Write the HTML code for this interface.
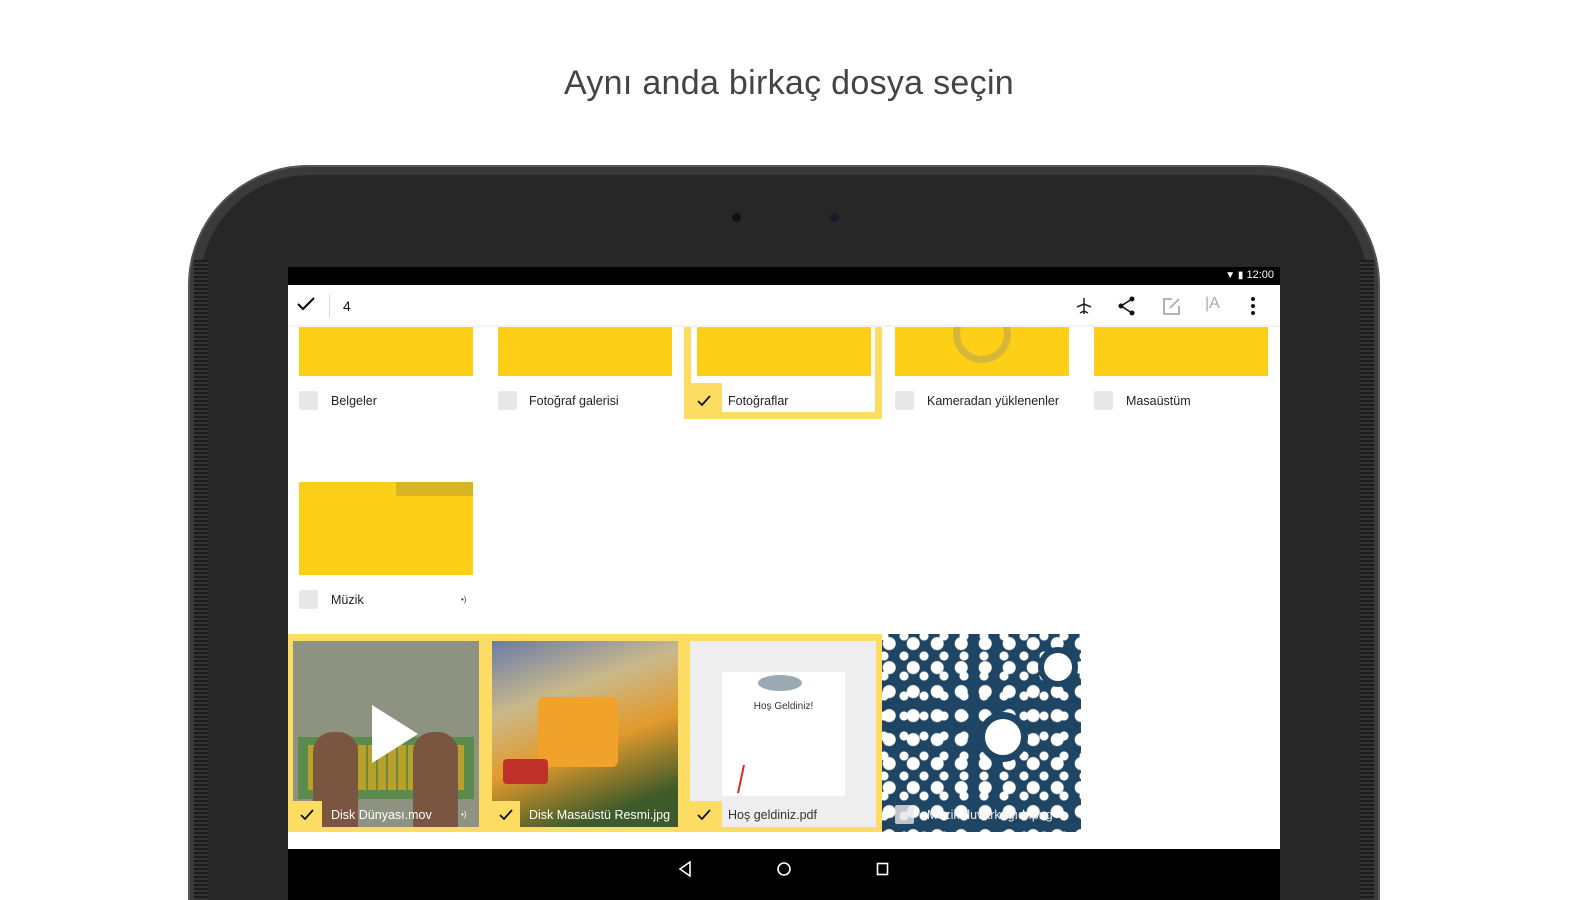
<!DOCTYPE html>
<html style="width:1593px;height:900px;overflow:hidden"><head><meta charset="utf-8"><style>
*{margin:0;padding:0;box-sizing:border-box}
body{width:1593px;height:900px;background:#fff;position:relative;overflow:hidden;font-family:"Liberation Sans",sans-serif}
.title{position:absolute;top:64px;left:0;width:1578px;text-align:center;font-size:34px;color:#444;letter-spacing:0.3px}
.tab{position:absolute;left:188px;top:165px;width:1192px;height:735px;border-radius:120px 120px 0 0;background:#3a3a3a;border:2px solid #555;border-bottom:0}
.tab2{position:absolute;left:200px;top:175px;width:1168px;height:725px;border-radius:110px 110px 0 0;background:#272727}
.grill{position:absolute;top:260px;width:14px;height:640px;background:repeating-linear-gradient(#1c1c1c 0 2px,#333 2px 4px)}
.cam{position:absolute;width:9px;height:9px;border-radius:50%;background:#111;top:213px}
.screen{position:absolute;left:288px;top:267px;width:992px;height:633px;background:#fff;overflow:hidden}
.sb{position:absolute;left:0;top:0;width:992px;height:18px;background:#000;color:#fff;font-size:11px;text-align:right;padding:2px 6px}
.tb{position:absolute;left:0;top:18px;width:992px;height:42px;background:#fff;border-bottom:2px solid #f3f3f3}
.y{position:absolute;background:#fdd017}
.lbl{position:absolute;font-size:12.5px;color:#222}
.cb{position:absolute;width:19px;height:19px;background:#e8e8e8;border-radius:2px}
.nav{position:absolute;left:0;top:582px;width:992px;height:51px;background:#000}
.sel{position:absolute;background:#fddc63}
</style></head><body>
<div class="title">Aynı anda birkaç dosya seçin</div>
<div class="tab"></div><div class="tab2"></div>
<div class="grill" style="left:194px"></div><div class="grill" style="left:1360px"></div>
<div class="cam" style="left:732px"></div><div class="cam" style="left:830px;background:#1a1a2a"></div>
<div class="screen">
 <div class="sb"><span style="font-size:10px">▼ ▮</span> 12:00</div>
 <div class="tb">
  <svg style="position:absolute;left:9px;top:12px" width="18" height="14"><path d="M1 7l5 5L17 1" stroke="#111" stroke-width="2.2" fill="none"/></svg>
  <div style="position:absolute;left:41px;top:9px;width:1px;height:24px;background:#ddd"></div>
  <div style="position:absolute;left:55px;top:13px;font-size:14px;color:#111">4</div>
  <svg style="position:absolute;left:786px;top:11px" width="20" height="20"><path d="M10 2v16M3 11l7-3 7 3M6 17l4-2 4 2" stroke="#222" stroke-width="1.5" fill="none"/></svg>
  <svg style="position:absolute;left:829px;top:11px" width="20" height="20"><circle cx="15" cy="3" r="2.5" fill="#111"/><circle cx="4" cy="10" r="2.5" fill="#111"/><circle cx="15" cy="17" r="2.5" fill="#111"/><path d="M15 3L4 10l11 7" stroke="#111" stroke-width="1.6" fill="none"/></svg>
  <svg style="position:absolute;left:874px;top:11px" width="20" height="20"><path d="M10 3H2v15h15v-8M8 12l9-9" stroke="#aaa" stroke-width="1.8" fill="none"/></svg>
  <div style="position:absolute;left:917px;top:10px;font-size:16px;color:#aaa">|A</div>
  <svg style="position:absolute;left:962px;top:11px" width="6" height="20"><circle cx="3" cy="3" r="2" fill="#111"/><circle cx="3" cy="10" r="2" fill="#111"/><circle cx="3" cy="17" r="2" fill="#111"/></svg>
 </div>
 <div class="sel" style="left:396px;top:60px;width:198px;height:92px"></div>
 <div style="position:absolute;left:403px;top:60px;width:184px;height:85px;background:#fff"></div>
 <div class="sel" style="left:396px;top:116px;width:38px;height:36px"></div>
 <div class="y" style="left:11px;top:60px;width:174px;height:49px"></div>
 <div class="y" style="left:210px;top:60px;width:174px;height:49px"></div>
 <div class="y" style="left:409px;top:60px;width:174px;height:49px"></div>
 <div class="y" style="left:607px;top:60px;width:174px;height:49px"></div>
 <div style="position:absolute;left:665px;top:38px;width:58px;height:58px;border:7px solid #d8b63a;border-radius:50%;clip-path:inset(22px 0 0 0)"></div>
 <div class="y" style="left:806px;top:60px;width:174px;height:49px"></div>
 <div class="cb" style="left:11px;top:124px"></div><div class="lbl" style="left:43px;top:127px">Belgeler</div>
 <div class="cb" style="left:210px;top:124px"></div><div class="lbl" style="left:241px;top:127px">Fotoğraf galerisi</div>
 <svg style="position:absolute;left:409px;top:128px" width="14" height="12"><path d="M1 6l4 4 8-9" stroke="#111" stroke-width="1.8" fill="none"/></svg><div class="lbl" style="left:440px;top:127px">Fotoğraflar</div>
 <div class="cb" style="left:607px;top:124px"></div><div class="lbl" style="left:639px;top:127px">Kameradan yüklenenler</div>
 <div class="cb" style="left:806px;top:124px"></div><div class="lbl" style="left:838px;top:127px">Masaüstüm</div>
 <div class="y" style="left:11px;top:215px;width:174px;height:93px"></div>
 <div style="position:absolute;left:108px;top:215px;width:77px;height:14px;background:#d9b523"></div>
 <div class="cb" style="left:11px;top:323px"></div><div class="lbl" style="left:43px;top:326px">Müzik</div>
 <div style="position:absolute;left:173px;top:328px;font-size:8px;color:#333">•)</div>
 <div class="sel" style="left:0;top:367px;width:594px;height:198px"></div>
 <div style="position:absolute;left:5px;top:374px;width:186px;height:186px;background:#8e9280"></div>
 <div style="position:absolute;left:10px;top:470px;width:176px;height:62px;background:#5b8a4d"></div>
 <div style="position:absolute;left:20px;top:478px;width:156px;height:45px;background:repeating-linear-gradient(90deg,#b8a12a 0 8px,#6c8a3f 8px 10px)"></div>
 <div style="position:absolute;left:25px;top:465px;width:45px;height:95px;background:#7a5540;border-radius:20px 20px 0 0"></div>
 <div style="position:absolute;left:125px;top:465px;width:45px;height:95px;background:#7a5540;border-radius:20px 20px 0 0"></div>
 <svg style="position:absolute;left:84px;top:438px" width="46" height="58"><path d="M0 0L46 29L0 58Z" fill="#fff"/></svg>
 <div style="position:absolute;left:204px;top:374px;width:186px;height:186px;background:linear-gradient(160deg,#6a7ba8 0%,#c9b98a 30%,#e29a2c 55%,#3c5a2a 85%)"></div>
 <div style="position:absolute;left:250px;top:430px;width:80px;height:70px;background:#f0a22a;border-radius:6px"></div>
 <div style="position:absolute;left:215px;top:492px;width:45px;height:25px;background:#c0302a;border-radius:4px"></div>
 <div style="position:absolute;left:402px;top:374px;width:186px;height:186px;background:#eee"></div>
 <div style="position:absolute;left:434px;top:405px;width:123px;height:124px;background:#fff"></div>
 <div style="position:absolute;left:470px;top:408px;width:44px;height:16px;background:#9aa9b2;border-radius:50%"></div>
 <div style="position:absolute;left:434px;top:434px;width:123px;text-align:center;font-size:10px;color:#333">Hoş Geldiniz!</div>
 <div style="position:absolute;left:448px;top:498px;width:6px;height:28px;border-right:2px solid #d22;transform:skewX(-12deg)"></div>
 <div style="position:absolute;left:0;top:534px;width:34px;height:31px;background:#fddc63"></div>
 <div style="position:absolute;left:198px;top:534px;width:34px;height:26px;background:#fddc63"></div>
 <div style="position:absolute;left:396px;top:534px;width:38px;height:26px;background:#fddc63"></div>
 <div style="position:absolute;left:594px;top:367px;width:199px;height:198px;background:radial-gradient(circle at 30% 40%,#fff 0 6px,transparent 7px) 0 0/24px 24px,radial-gradient(circle,#fff 0 4px,transparent 5px) 12px 12px/20px 20px,#1f4565"></div>
 <div style="position:absolute;left:750px;top:380px;width:40px;height:40px;background:#fff;border-radius:50%;border:6px solid #1f4565"></div>
 <div style="position:absolute;left:690px;top:445px;width:50px;height:50px;background:#fff;border-radius:50%;border:7px solid #1f4565"></div>
 <svg style="position:absolute;left:12px;top:542px" width="14" height="12"><path d="M1 6l4 4 8-9" stroke="#111" stroke-width="1.8" fill="none"/></svg>
 <svg style="position:absolute;left:211px;top:542px" width="14" height="12"><path d="M1 6l4 4 8-9" stroke="#111" stroke-width="1.8" fill="none"/></svg>
 <svg style="position:absolute;left:409px;top:542px" width="14" height="12"><path d="M1 6l4 4 8-9" stroke="#111" stroke-width="1.8" fill="none"/></svg>
 <div class="lbl" style="left:43px;top:541px;color:#fff">Disk Dünyası.mov</div>
 <div style="position:absolute;left:173px;top:543px;font-size:8px;color:#fff">•)</div>
 <div class="lbl" style="left:241px;top:541px;color:#fff">Disk Masaüstü Resmi.jpg</div>
 <div class="lbl" style="left:440px;top:541px;color:#333">Hoş geldiniz.pdf</div>
 <div class="cb" style="left:607px;top:538px;background:rgba(230,230,230,.8)"></div>
 <div class="lbl" style="left:639px;top:541px;color:#eee">Müzik duvarkağıdı.png</div>
 <div class="nav">
  <svg style="position:absolute;left:390px;top:12px" width="14" height="16"><path d="M12 1L2 8l10 7Z" stroke="#fff" stroke-width="1.6" fill="none"/></svg>
  <svg style="position:absolute;left:488px;top:12px" width="16" height="16"><circle cx="8" cy="8" r="6" stroke="#fff" stroke-width="1.6" fill="none"/></svg>
  <svg style="position:absolute;left:588px;top:13px" width="14" height="14"><rect x="1.5" y="1.5" width="10" height="11" stroke="#fff" stroke-width="1.6" fill="none"/></svg>
 </div>
</div>
</body></html>
